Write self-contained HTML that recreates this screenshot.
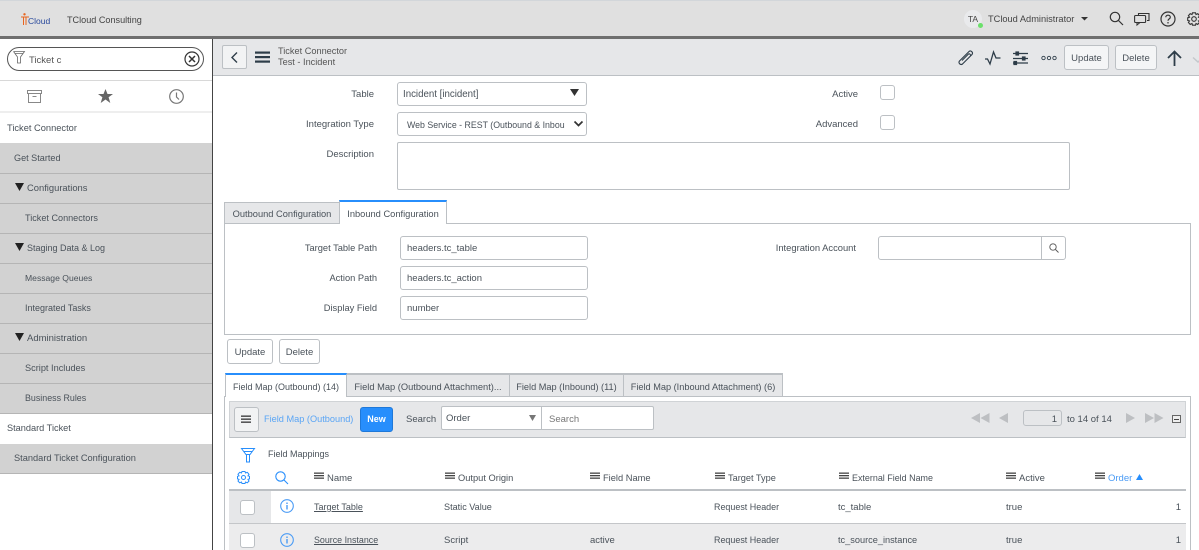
<!DOCTYPE html>
<html><head><meta charset="utf-8"><style>
*{box-sizing:border-box}
html,body{margin:0;padding:0;width:1199px;height:550px;overflow:hidden;background:#fff}
body{position:relative;font-family:"Liberation Sans",sans-serif;font-size:9.500px;color:#3c4650}
.a,.t,.r{position:absolute}
.t,.r{line-height:14px;white-space:nowrap;color:#4a525a;margin-top:1px}
.t:not([style*="font-size"]),.r:not([style*="font-size"]){margin-top:2px}
.r{text-align:right}
.i{position:absolute;background:#fff;border:1px solid #bcc0c4;border-radius:3px}
.b{position:absolute;background:#fff;border:1px solid #bcc0c4;border-radius:3px;text-align:center;color:#4a525a;line-height:25px;font-size:9.500px}
.row{position:absolute;left:0;width:212px;height:30px;background:#d2d2d2;border-bottom:1px solid #b5b5b5}
.tab{position:absolute;background:#e6e7e9;border:1px solid #bcc0c4;border-left:0;text-align:center;color:#4a525a;line-height:22px;white-space:nowrap}
.on{background:#fff;border-top:2px solid #278efc;border-bottom:0}
svg{position:absolute;overflow:visible}
u{text-decoration:underline}
</style></head><body>
<!-- top header -->
<div class="a" style="left:0;top:0;width:1199px;height:36px;background:#e0e0e0;border-top:1px solid #d2d6da"></div>
<div class="a" style="left:0;top:36px;width:1199px;height:3px;background:#6f6f6f"></div>
<svg style="left:20px;top:13px" width="12" height="14" fill="none" stroke="#e8641e" stroke-width="1"><circle cx="4.500" cy="1.300" r="1.200" fill="#e8641e" stroke="none"/><path d="M1 4H9M3.500 4V12M6 4V12"/></svg>
<div class="t" style="left:28px;top:13px;color:#2a4a9c;font-size:8.500px">Cloud</div>
<div class="t" style="left:67px;top:12px;font-size:9.100px;color:#444">TCloud Consulting</div>
<div class="a" style="left:964px;top:10px;width:18px;height:18px;border-radius:50%;background:#e9eaec;text-align:center;line-height:18px;font-size:8.500px;color:#444">TA</div>
<div class="a" style="left:978px;top:23px;width:5px;height:5px;border-radius:50%;background:#6be06b"></div>
<div class="t" style="left:988px;top:11px;font-size:9.250px;color:#444">TCloud Administrator</div>
<svg style="left:1081px;top:17px" width="8" height="4"><path d="M0 0H7L3.500 3.500Z" fill="#333"/></svg>
<svg style="left:1109px;top:11px" width="16" height="16" fill="none" stroke="#333" stroke-width="1.200"><circle cx="6" cy="6" r="4.700"/><path d="M9.500 9.500L14 14"/></svg>
<svg style="left:1134px;top:12px" width="16" height="14" fill="none" stroke="#333" stroke-width="1.100"><path d="M4.500 3V1.500H15V8.500H13"/><rect x="0.600" y="3.500" width="11" height="7" rx="1"/><path d="M3 10.500V13L6 10.500"/></svg>
<svg style="left:1160px;top:11px" width="16" height="16" fill="none" stroke="#333" stroke-width="1.200"><circle cx="8" cy="8" r="7"/><path d="M5.800 6.200C5.800 3.500 10.300 3.500 10.300 6.200C10.300 8 8 7.800 8 9.800M8 11V12.500"/></svg>
<svg style="left:1187px;top:12px" width="14" height="14" fill="none" stroke="#333" stroke-width="1.100"><circle cx="7" cy="7" r="2.300"/><path d="M5.500 0.800H8.500L9 2.500L10.800 1.700L12.600 3.700L11.500 5.200L13.300 5.800V8.400L11.500 8.900L12.500 10.500L10.700 12.400L9 11.500L8.500 13.200H5.500L5 11.500L3.200 12.400L1.400 10.500L2.500 8.900L0.700 8.400V5.800L2.500 5.200L1.400 3.700L3.200 1.700L5 2.500Z"/></svg>

<!-- sidebar -->
<div class="a" style="left:212px;top:39px;width:1px;height:511px;background:#444"></div>
<div class="a" style="left:7px;top:47px;width:197px;height:24px;border:1px solid #555;border-radius:12px;background:#fff"></div>
<svg style="left:13px;top:51px" width="12" height="13" fill="none" stroke="#666" stroke-width="0.800"><path d="M0.500 0.500H11.500L7.500 6V9M0.500 0.500L4.500 6V12H7.500V9M2 2.500H10"/></svg>
<div class="t" style="left:29px;top:52px;color:#555">Ticket c</div>
<svg style="left:184px;top:51px" width="16" height="16" fill="none" stroke="#333" stroke-width="1.200"><circle cx="8" cy="8" r="7"/><path d="M5 5L11 11M11 5L5 11" stroke-width="1.500"/></svg>
<div class="a" style="left:0;top:80px;width:212px;height:1px;background:#d8d8d8"></div>
<svg style="left:27px;top:90px" width="15" height="13" fill="none" stroke="#888" stroke-width="1"><rect x="0.500" y="0.500" width="14" height="3"/><path d="M1.500 3.500V12.500H13.500V3.500M5.500 6.500H9.500"/></svg>
<svg style="left:98px;top:89px" width="15" height="14"><path d="M7.500 0L9.500 5H15L10.600 8.200L12.300 14L7.500 10.500L2.700 14L4.400 8.200L0 5H5.500Z" fill="#666"/></svg>
<svg style="left:169px;top:89px" width="15" height="15" fill="none" stroke="#777" stroke-width="1.200"><circle cx="7.500" cy="7.500" r="6.800"/><path d="M7.500 3.500V8L10 10.500"/></svg>
<div class="a" style="left:0;top:111px;width:212px;height:2px;background:#eee"></div>
<div class="t" style="left:7px;top:120px;font-size:9.300px">Ticket Connector</div>
<div class="a" style="left:0;top:143px;width:212px;height:1px;background:#d2d2d2"></div>
<div class="row" style="top:144px"></div><div class="t" style="left:14px;top:150px;font-size:9.100px">Get Started</div>
<div class="row" style="top:174px"></div><svg style="left:15px;top:183px" width="9" height="8"><path d="M0 0H9L4.500 8Z" fill="#222"/></svg><div class="t" style="left:27px;top:180px;font-size:9.400px">Configurations</div>
<div class="row" style="top:204px"></div><div class="t" style="left:25px;top:210px;font-size:9.100px">Ticket Connectors</div>
<div class="row" style="top:234px"></div><svg style="left:15px;top:243px" width="9" height="8"><path d="M0 0H9L4.500 8Z" fill="#222"/></svg><div class="t" style="left:27px;top:240px;font-size:9px">Staging Data &amp; Log</div>
<div class="row" style="top:264px"></div><div class="t" style="left:25px;top:270px;font-size:8.600px">Message Queues</div>
<div class="row" style="top:294px"></div><div class="t" style="left:25px;top:300px;font-size:9px">Integrated Tasks</div>
<div class="row" style="top:324px"></div><svg style="left:15px;top:333px" width="9" height="8"><path d="M0 0H9L4.500 8Z" fill="#222"/></svg><div class="t" style="left:27px;top:330px">Administration</div>
<div class="row" style="top:354px"></div><div class="t" style="left:25px;top:360px;font-size:9.200px">Script Includes</div>
<div class="row" style="top:384px"></div><div class="t" style="left:25px;top:390px;font-size:8.900px">Business Rules</div>
<div class="t" style="left:7px;top:420px;font-size:9.200px">Standard Ticket</div>
<div class="row" style="top:444px"></div><div class="t" style="left:14px;top:450px;font-size:9.250px">Standard Ticket Configuration</div>

<!-- form header -->
<div class="a" style="left:213px;top:39px;width:986px;height:37px;background:#e6e7e9;border-bottom:1px solid #bcc0c4"></div>
<div class="a" style="left:222px;top:45px;width:25px;height:24px;background:#f2f3f4;border:1px solid #bcc0c4;border-radius:2px"></div>
<svg style="left:231px;top:52px" width="7" height="11" fill="none" stroke="#2e3d49" stroke-width="1.400"><path d="M6 0.500L1 5.500L6 10.500"/></svg>
<svg style="left:255px;top:51px" width="16" height="12" fill="#2e3d49"><rect width="15" height="2.200" y="0.500"/><rect width="15" height="2.200" y="5"/><rect width="15" height="2.200" y="9.500"/></svg>
<div class="t" style="left:278px;top:43px;color:#555;font-size:9.200px">Ticket Connector</div>
<div class="t" style="left:278px;top:54px;color:#555;font-size:9.200px">Test - Incident</div>
<svg style="left:958px;top:50px" width="16" height="16" fill="none" stroke="#2e3d49" stroke-width="1.100"><path d="M4 14.500L14 4.500C15.500 2.500 13 0 11 1.500L1.500 11C0 13 2.500 15.500 4.500 14L12.500 6C13 4.500 11.500 3.500 10.500 4L4 10.500"/></svg>
<svg style="left:985px;top:51px" width="16" height="14" fill="none" stroke="#2e3d49" stroke-width="1.300"><path d="M0 8H2.500L5 13L8.500 1L11 7H15.500"/></svg>
<svg style="left:1013px;top:51px" width="15" height="14" fill="none" stroke="#2e3d49" stroke-width="1.200"><path d="M0 2.500H15M0 7.500H15M0 12H15"/><rect x="3" y="1" width="2.500" height="3" fill="#2e3d49"/><rect x="9.500" y="6" width="2.500" height="3" fill="#2e3d49"/><rect x="1" y="10.500" width="2.500" height="3" fill="#2e3d49"/></svg>
<svg style="left:1041px;top:55px" width="16" height="6" fill="none" stroke="#2e3d49" stroke-width="0.900"><circle cx="2.500" cy="3" r="1.700"/><circle cx="8" cy="3" r="1.700"/><circle cx="13.500" cy="3" r="1.700"/></svg>
<div class="b" style="left:1064px;top:45px;width:45px;height:25px;background:#f4f5f6">Update</div>
<div class="b" style="left:1115px;top:45px;width:42px;height:25px;background:#f4f5f6">Delete</div>
<svg style="left:1167px;top:50px" width="15" height="16" fill="none" stroke="#2e3d49" stroke-width="1.800"><path d="M7.500 16V1.500M1 8L7.500 1.500L14 8"/></svg>
<svg style="left:1193px;top:57px" width="8" height="6" fill="none" stroke="#c4c8cc" stroke-width="1.500"><path d="M0 0.500L5 5L10 0.500"/></svg>

<!-- form -->
<div class="r" style="left:214px;width:160px;top:86px">Table</div>
<div class="i" style="left:397px;top:82px;width:190px;height:24px"></div>
<div class="t" style="left:403px;top:87px;font-size:9.700px">Incident [incident]</div>
<svg style="left:570px;top:89px" width="9" height="7"><path d="M0 0H9L4.500 7Z" fill="#333"/></svg>
<div class="r" style="left:214px;width:160px;top:116px">Integration Type</div>
<div class="i" style="left:397px;top:112px;width:190px;height:24px"></div>
<div class="t" style="left:407px;top:117px;width:160px;overflow:hidden;font-size:8.800px">Web Service - REST (Outbound &amp; Inbou</div>
<svg style="left:574px;top:121px" width="9" height="6" fill="none" stroke="#333" stroke-width="1.700"><path d="M0.500 0.500L4.500 4.500L8.500 0.500"/></svg>
<div class="r" style="left:214px;width:160px;top:146px">Description</div>
<div class="i" style="left:397px;top:142px;width:673px;height:48px;border-radius:2px"></div>
<div class="r" style="left:750px;width:108px;top:86px">Active</div>
<div class="i" style="left:880px;top:85px;width:15px;height:15px"></div>
<div class="r" style="left:750px;width:108px;top:116px">Advanced</div>
<div class="i" style="left:880px;top:115px;width:15px;height:15px"></div>

<!-- config tabs -->
<div class="a" style="left:224px;top:223px;width:967px;height:112px;border:1px solid #bcc0c4"></div>
<div class="tab" style="left:224px;top:202px;width:116px;height:22px;border-left:1px solid #bcc0c4;font-size:9.300px;line-height:22px">Outbound Configuration</div>
<div class="tab on" style="left:339px;top:200px;width:108px;height:24px;border-left:1px solid #bcc0c4;line-height:24px;font-size:9.300px">Inbound Configuration</div>
<div class="r" style="left:224px;width:153px;top:240px;font-size:9.300px">Target Table Path</div>
<div class="i" style="left:400px;top:236px;width:188px;height:24px"></div>
<div class="t" style="left:407px;top:240px">headers.tc_table</div>
<div class="r" style="left:224px;width:153px;top:270px;font-size:9.300px">Action Path</div>
<div class="i" style="left:400px;top:266px;width:188px;height:24px"></div>
<div class="t" style="left:407px;top:270px">headers.tc_action</div>
<div class="r" style="left:224px;width:153px;top:300px;font-size:9.300px">Display Field</div>
<div class="i" style="left:400px;top:296px;width:188px;height:24px"></div>
<div class="t" style="left:407px;top:300px">number</div>
<div class="r" style="left:750px;width:106px;top:240px;font-size:9.400px">Integration Account</div>
<div class="i" style="left:878px;top:236px;width:188px;height:24px"></div>
<div class="a" style="left:1041px;top:236px;width:1px;height:24px;background:#bcc0c4"></div>
<svg style="left:1049px;top:243px" width="10" height="10" fill="none" stroke="#555" stroke-width="0.900"><circle cx="4" cy="4" r="3.200"/><path d="M6.500 6.500L9.500 9.500"/></svg>
<div class="b" style="left:227px;top:339px;width:46px;height:25px">Update</div>
<div class="b" style="left:279px;top:339px;width:41px;height:25px">Delete</div>

<!-- related list tabs -->
<div class="a" style="left:224px;top:396px;width:967px;height:154px;border:1px solid #bcc0c4;border-bottom:0"></div>
<div class="a" style="left:225px;top:373px;width:558px;height:1px;background:#bcc0c4"></div>
<div class="tab on" style="left:225px;top:373px;width:122px;height:24px;line-height:25px;border-left:1px solid #bcc0c4;font-size:9px">Field Map (Outbound) (14)</div>
<div class="tab" style="left:347px;top:374px;width:163px;height:23px;line-height:24px;font-size:9.300px">Field Map (Outbound Attachment)...</div>
<div class="tab" style="left:510px;top:374px;width:114px;height:23px;line-height:24px;font-size:9.200px">Field Map (Inbound) (11)</div>
<div class="tab" style="left:624px;top:374px;width:159px;height:23px;line-height:24px;font-size:9.200px">Field Map (Inbound Attachment) (6)</div>

<!-- list toolbar -->
<div class="a" style="left:229px;top:401px;width:957px;height:37px;background:#e6e7e9;border:1px solid #d0d3d6;border-bottom:1px solid #bcc0c4"></div>
<div class="a" style="left:234px;top:407px;width:25px;height:25px;background:#f2f3f4;border:1px solid #bcc0c4;border-radius:3px"></div>
<svg style="left:241px;top:415px" width="11" height="9" fill="#333"><rect width="10" height="1.300" y="0.500"/><rect width="10" height="1.300" y="3.500"/><rect width="10" height="1.300" y="6.500"/></svg>
<div class="t" style="left:264px;top:411px;color:#5aa5f5;font-size:9.200px">Field Map (Outbound)</div>
<div class="a" style="left:360px;top:407px;width:33px;height:25px;background:#278efc;border:1px solid #1f78d8;border-radius:3px;color:#fff;text-align:center;line-height:23px;font-weight:bold;font-size:9px">New</div>
<div class="t" style="left:406px;top:411px">Search</div>
<div class="i" style="left:441px;top:406px;width:213px;height:24px;border-radius:2px"></div>
<div class="a" style="left:541px;top:406px;width:1px;height:24px;background:#bcc0c4"></div>
<div class="t" style="left:446px;top:410px">Order</div>
<svg style="left:529px;top:415px" width="7" height="6"><path d="M0 0H7L3.500 6Z" fill="#777"/></svg>
<div class="t" style="left:549px;top:411px;color:#777">Search</div>
<svg style="left:971px;top:413px" width="40" height="11" fill="#bdbfc2"><path d="M9 0V10L0 5ZM18.500 0V10L9.500 5ZM37 0V10L28 5Z"/></svg>
<svg style="left:1125px;top:413px" width="40" height="11" fill="#bdbfc2"><path d="M1 0V10L10 5ZM20 0V10L29 5ZM29.500 0V10L38.500 5Z"/></svg>
<div class="i" style="left:1023px;top:410px;width:39px;height:16px;background:#e6e7e9"></div>
<div class="r" style="left:1023px;width:34px;top:411px">1</div>
<div class="t" style="left:1067px;top:411px">to 14 of 14</div>
<div class="a" style="left:1172px;top:415px;width:9px;height:8px;border:1px solid #666;background:#eee"></div>
<div class="a" style="left:1174px;top:419px;width:5px;height:1px;background:#444"></div>

<svg style="left:241px;top:448px" width="15" height="15" fill="none" stroke="#278efc" stroke-width="1"><path d="M0.500 0.500H13.500L9 6.500H5ZM2.500 3.500H11.500M5.500 6.500V14H8.500V6.500" /></svg>
<div class="t" style="left:268px;top:446px;font-size:9px">Field Mappings</div>
<svg style="left:237px;top:471px" width="13" height="13" fill="none" stroke="#278efc" stroke-width="1"><circle cx="6.500" cy="6.500" r="2"/><path d="M5 0.500H8L8.500 2L10.300 1.300L12 3.300L11 4.800L12.500 5.300V7.900L11 8.400L12 10L10.300 11.800L8.500 11L8 12.500H5L4.500 11L2.700 11.800L1 10L2 8.400L0.500 7.900V5.300L2 4.800L1 3.300L2.700 1.300L4.500 2Z"/></svg>
<svg style="left:275px;top:471px" width="14" height="14" fill="none" stroke="#278efc" stroke-width="1.100"><circle cx="5.500" cy="5.500" r="4.700"/><path d="M9 9L13 13"/></svg>
<svg style="left:0;top:0" width="1199" height="550" fill="#444">
<g><rect x="314" y="472.500" width="10" height="1.300"/><rect x="314" y="475" width="10" height="1.300"/><rect x="314" y="477.500" width="10" height="1.300"/></g>
<g><rect x="445" y="472.500" width="10" height="1.300"/><rect x="445" y="475" width="10" height="1.300"/><rect x="445" y="477.500" width="10" height="1.300"/></g>
<g><rect x="590" y="472.500" width="10" height="1.300"/><rect x="590" y="475" width="10" height="1.300"/><rect x="590" y="477.500" width="10" height="1.300"/></g>
<g><rect x="715" y="472.500" width="10" height="1.300"/><rect x="715" y="475" width="10" height="1.300"/><rect x="715" y="477.500" width="10" height="1.300"/></g>
<g><rect x="839" y="472.500" width="10" height="1.300"/><rect x="839" y="475" width="10" height="1.300"/><rect x="839" y="477.500" width="10" height="1.300"/></g>
<g><rect x="1006" y="472.500" width="10" height="1.300"/><rect x="1006" y="475" width="10" height="1.300"/><rect x="1006" y="477.500" width="10" height="1.300"/></g>
<g><rect x="1095" y="472.500" width="10" height="1.300"/><rect x="1095" y="475" width="10" height="1.300"/><rect x="1095" y="477.500" width="10" height="1.300"/></g>
<path d="M1136 480H1143L1139.500 474Z" fill="#278efc"/>
</svg>
<div class="t" style="left:327px;top:470px">Name</div>
<div class="t" style="left:458px;top:470px;font-size:9.300px">Output Origin</div>
<div class="t" style="left:603px;top:470px;font-size:9.300px">Field Name</div>
<div class="t" style="left:728px;top:470px;font-size:9.200px">Target Type</div>
<div class="t" style="left:852px;top:470px;font-size:8.950px">External Field Name</div>
<div class="t" style="left:1019px;top:470px">Active</div>
<div class="t" style="left:1108px;top:470px;color:#4a9bf5">Order</div>
<div class="a" style="left:229px;top:489px;width:957px;height:2px;background:#bcc0c4"></div>

<!-- rows -->
<div class="a" style="left:229px;top:491px;width:42px;height:32px;background:#e6e7e9"></div>
<div class="a" style="left:229px;top:523px;width:957px;height:1px;background:#c4c6c9"></div>
<div class="a" style="left:229px;top:524px;width:957px;height:26px;background:#ececed"></div>
<div class="i" style="left:240px;top:500px;width:15px;height:15px"></div>
<div class="i" style="left:240px;top:533px;width:15px;height:15px"></div>
<svg style="left:280px;top:499px" width="14" height="14" fill="none" stroke="#4a9bf5" stroke-width="1.100"><circle cx="7" cy="7" r="6.300"/><path d="M7 6V10.500M7 3.500V5" stroke-width="1.400"/></svg>
<svg style="left:280px;top:533px" width="14" height="14" fill="none" stroke="#4a9bf5" stroke-width="1.100"><circle cx="7" cy="7" r="6.300"/><path d="M7 6V10.500M7 3.500V5" stroke-width="1.400"/></svg>
<div class="t" style="left:314px;top:499px;font-size:9px"><u>Target Table</u></div>
<div class="t" style="left:444px;top:499px;font-size:9.100px">Static Value</div>
<div class="t" style="left:714px;top:499px;font-size:8.950px">Request Header</div>
<div class="t" style="left:838px;top:499px">tc_table</div>
<div class="t" style="left:1006px;top:499px">true</div>
<div class="r" style="left:1150px;width:31px;top:499px">1</div>
<div class="t" style="left:314px;top:532px;font-size:8.900px"><u>Source Instance</u></div>
<div class="t" style="left:444px;top:532px">Script</div>
<div class="t" style="left:590px;top:532px">active</div>
<div class="t" style="left:714px;top:532px;font-size:8.950px">Request Header</div>
<div class="t" style="left:838px;top:532px;font-size:9.200px">tc_source_instance</div>
<div class="t" style="left:1006px;top:532px">true</div>
<div class="r" style="left:1150px;width:31px;top:532px">1</div>
</body></html>
